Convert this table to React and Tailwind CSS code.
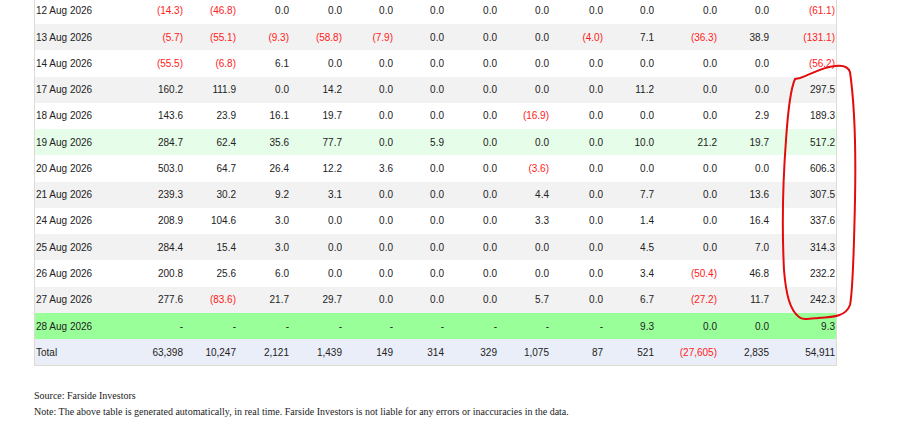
import React from "react";

const widths = [96, 53, 53, 53, 53, 51, 51, 53, 52, 54, 51, 63, 52, 66];

const rows = [
  { date: "12 Aug 2026", bg: "bg-white", v: ["(14.3)", "(46.8)", "0.0", "0.0", "0.0", "0.0", "0.0", "0.0", "0.0", "0.0", "0.0", "0.0", "(61.1)"] },
  { date: "13 Aug 2026", bg: "bg-[#f2f2f2]", v: ["(5.7)", "(55.1)", "(9.3)", "(58.8)", "(7.9)", "0.0", "0.0", "0.0", "(4.0)", "7.1", "(36.3)", "38.9", "(131.1)"] },
  { date: "14 Aug 2026", bg: "bg-white", v: ["(55.5)", "(6.8)", "6.1", "0.0", "0.0", "0.0", "0.0", "0.0", "0.0", "0.0", "0.0", "0.0", "(56.2)"] },
  { date: "17 Aug 2026", bg: "bg-[#f2f2f2]", v: ["160.2", "111.9", "0.0", "14.2", "0.0", "0.0", "0.0", "0.0", "0.0", "11.2", "0.0", "0.0", "297.5"] },
  { date: "18 Aug 2026", bg: "bg-white", v: ["143.6", "23.9", "16.1", "19.7", "0.0", "0.0", "0.0", "(16.9)", "0.0", "0.0", "0.0", "2.9", "189.3"] },
  { date: "19 Aug 2026", bg: "bg-[#e6fde9]", v: ["284.7", "62.4", "35.6", "77.7", "0.0", "5.9", "0.0", "0.0", "0.0", "10.0", "21.2", "19.7", "517.2"] },
  { date: "20 Aug 2026", bg: "bg-white", v: ["503.0", "64.7", "26.4", "12.2", "3.6", "0.0", "0.0", "(3.6)", "0.0", "0.0", "0.0", "0.0", "606.3"] },
  { date: "21 Aug 2026", bg: "bg-[#f2f2f2]", v: ["239.3", "30.2", "9.2", "3.1", "0.0", "0.0", "0.0", "4.4", "0.0", "7.7", "0.0", "13.6", "307.5"] },
  { date: "24 Aug 2026", bg: "bg-white", v: ["208.9", "104.6", "3.0", "0.0", "0.0", "0.0", "0.0", "3.3", "0.0", "1.4", "0.0", "16.4", "337.6"] },
  { date: "25 Aug 2026", bg: "bg-[#f2f2f2]", v: ["284.4", "15.4", "3.0", "0.0", "0.0", "0.0", "0.0", "0.0", "0.0", "4.5", "0.0", "7.0", "314.3"] },
  { date: "26 Aug 2026", bg: "bg-white", v: ["200.8", "25.6", "6.0", "0.0", "0.0", "0.0", "0.0", "0.0", "0.0", "3.4", "(50.4)", "46.8", "232.2"] },
  { date: "27 Aug 2026", bg: "bg-[#f2f2f2]", v: ["277.6", "(83.6)", "21.7", "29.7", "0.0", "0.0", "0.0", "5.7", "0.0", "6.7", "(27.2)", "11.7", "242.3"] },
  { date: "28 Aug 2026", bg: "bg-[#99ff99]", v: ["-", "-", "-", "-", "-", "-", "-", "-", "-", "9.3", "0.0", "0.0", "9.3"] },
  { date: "Total", bg: "bg-[#eaeef8]", v: ["63,398", "10,247", "2,121", "1,439", "149", "314", "329", "1,075", "87", "521", "(27,605)", "2,835", "54,911"] },
];

const App = () => {
  return (
    <div className="relative w-[900px] h-[426px] overflow-hidden bg-white">
      <div className="ml-[34px] -mt-[2.27px] w-[803px] border-x border-b border-[#dedbd0]">
        <table className="table-fixed border-collapse w-[801px] text-[10px] text-[#222] font-['Liberation_Sans',Arial,sans-serif]">
          <colgroup>
            {widths.map((w, i) => (
              <col key={i} style={{ width: w }} />
            ))}
          </colgroup>
          <tbody>
            {rows.map((row) => (
              <tr key={row.date} className={`h-[26.27px] ${row.bg}`}>
                <td className="pl-[1px] text-left whitespace-nowrap">{row.date}</td>
                {row.v.map((val, i) => (
                  <td
                    key={i}
                    className={`pr-[1px] text-right whitespace-nowrap ${val.startsWith("(") ? "text-[#ff1a1a]" : ""}`}
                  >
                    {val}
                  </td>
                ))}
              </tr>
            ))}
          </tbody>
        </table>
      </div>

      <div className="ml-[34px] mt-[22px] text-[10px] leading-4 text-[#222] font-['Liberation_Serif','Times_New_Roman',serif]">
        <p>Source: Farside Investors</p>
        <p>
          Note: The above table is generated automatically, in real time. Farside Investors is not liable for any errors or
          inaccuracies in the data.
        </p>
      </div>

      <svg className="absolute left-0 top-0 pointer-events-none" width="900" height="426">
        <path
          d="M795 79 L800 78 C812 74 822 67 835 66 C842 65 848 66 850 72 C854 100 856 150 855 200 C854 250 853 290 850 305 C846 316 835 317 818 318 C808 319 802 320 799 317 C790 310 786 295 784 270 C782 230 783 180 786 140 C788 110 790 90 795 79"
          fill="none"
          stroke="#e30b0b"
          strokeWidth="2"
          strokeLinecap="round"
          strokeLinejoin="round"
        />
      </svg>
    </div>
  );
};

export default App;
